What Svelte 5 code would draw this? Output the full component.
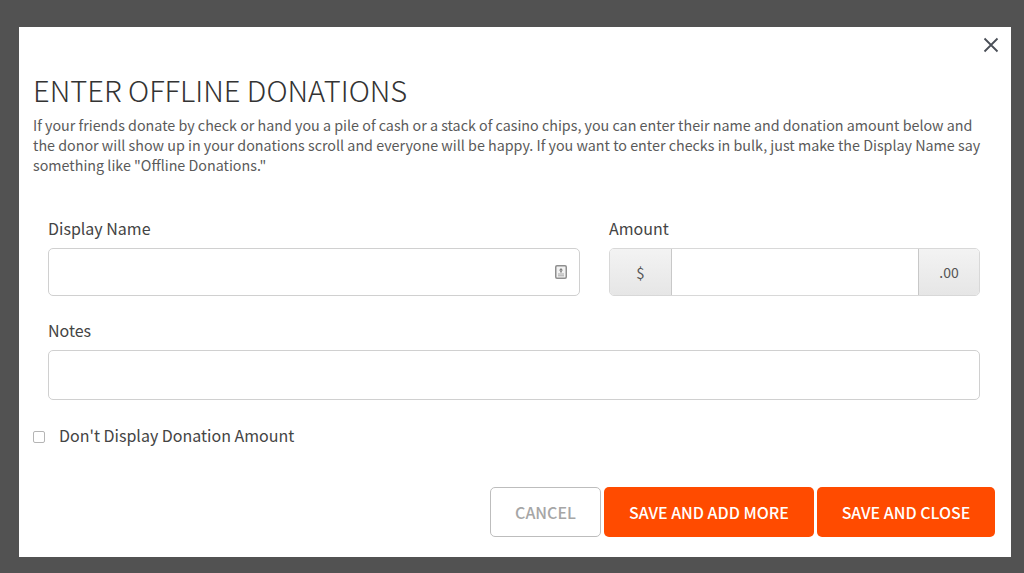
<script>
	let displayName = $state('');
	let amount = $state('');
	let notes = $state('');
	let hideAmount = $state(false);
</script>

<div class="overlay">
	<div class="modal">
		<div class="close-row">
			<button class="close" aria-label="Close">
				<svg viewBox="0 0 16 16" width="16" height="16">
					<path d="M1.5 1.5l13 13M14.5 1.5l-13 13" stroke="#4a4f57" stroke-width="1.8" fill="none" />
				</svg>
			</button>
		</div>

		<h1>ENTER OFFLINE DONATIONS</h1>
		<p class="intro">
			If your friends donate by check or hand you a pile of cash or a stack of casino chips, you can enter their name and donation amount below and the donor will show up in your donations scroll and everyone will be happy. If you want to enter checks in bulk, just make the Display Name say something like "Offline Donations."
		</p>

		<div class="form">
			<div class="row">
				<div class="field name">
					<label for="display-name">Display Name</label>
					<div class="input-wrap">
						<input id="display-name" bind:value={displayName} />
						<svg class="contact-icon" viewBox="0 0 12 14" width="12" height="14">
							<rect x="0.75" y="0.75" width="10.5" height="12.5" rx="1.2" fill="#f2f2f2" stroke="#8f8f8f" stroke-width="1.5" />
							<path d="M6 3l2 2.4H4z" fill="#7d7d7d" />
							<path d="M5.2 5.4h1.6v2.2H5.2z" fill="#7d7d7d" />
							<path d="M3 9h6M3 10.8h6" stroke="#a8a8a8" />
						</svg>
					</div>
				</div>
				<div class="field amount">
					<label for="amount">Amount</label>
					<div class="group">
						<span class="addon dollar">$</span>
						<input id="amount" bind:value={amount} />
						<span class="addon cents">.00</span>
					</div>
				</div>
			</div>

			<div class="field">
				<label for="notes">Notes</label>
				<input id="notes" class="notes" bind:value={notes} />
			</div>
		</div>

		<label class="check">
			<input type="checkbox" bind:checked={hideAmount} />
			<span>Don't Display Donation Amount</span>
		</label>

		<div class="actions">
			<button class="btn cancel">CANCEL</button>
			<button class="btn primary more">SAVE AND ADD MORE</button>
			<button class="btn primary done">SAVE AND CLOSE</button>
		</div>
	</div>
</div>

<style>
	:global(body) {
		margin: 0;
	}

	.overlay {
		box-sizing: border-box;
		height: 573px;
		padding: 27px 13px 16px 19px;
		background: #525252;
		font-family: "Noto Sans CJK SC", "Open Sans", sans-serif;
	}

	.modal {
		box-sizing: border-box;
		height: 530px;
		padding: 0 16px 0 14px;
		background: #fff;
		display: flex;
		flex-direction: column;
	}

	.close-row {
		display: flex;
		justify-content: flex-end;
		height: 44px;
		margin-right: -4px;
	}

	.close {
		margin-top: 10px;
		width: 16px;
		height: 16px;
		padding: 0;
		border: none;
		background: none;
		cursor: pointer;
	}

	.close svg {
		display: block;
	}

	h1 {
		margin: 0;
		font-size: 29.1px;
		line-height: 36px;
		font-weight: 300;
		color: #333;
	}

	.intro {
		margin: 8px 0 0;
		width: 950px;
		font-size: 14.3px;
		line-height: 20px;
		color: #5a5a5a;
	}

	.form {
		margin: 41px 0 0 15px;
		width: 932px;
		display: flex;
		flex-direction: column;
		gap: 22px;
	}

	.row {
		display: flex;
		gap: 29px;
	}

	.field {
		display: flex;
		flex-direction: column;
	}

	.name {
		width: 532px;
	}

	.amount {
		width: 371px;
	}

	label {
		font-size: 16px;
		line-height: 24px;
		color: #444;
	}

	.field > label {
		margin-bottom: 8px;
	}

	input:not([type='checkbox']) {
		box-sizing: border-box;
		width: 100%;
		height: 48px;
		padding: 0 12px;
		border: 1px solid #d0d0d0;
		border-radius: 5px;
		background: #fff;
		font: inherit;
		outline: none;
	}

	.input-wrap {
		position: relative;
	}

	.contact-icon {
		position: absolute;
		right: 13px;
		top: 17px;
	}

	.group {
		display: flex;
		height: 48px;
		box-sizing: border-box;
		border: 1px solid #d8d8d8;
		border-radius: 5px;
		overflow: hidden;
	}

	.group input {
		flex: 1;
		min-width: 0;
		height: 46px;
		border: none;
		border-radius: 0;
	}

	.addon {
		display: flex;
		align-items: center;
		justify-content: center;
		background: linear-gradient(#f3f3f3, #e6e6e6);
		color: #555;
		font-size: 14px;
	}

	.dollar {
		width: 61px;
		border-right: 1px solid #c8c8c8;
		font-size: 15px;
	}

	.cents {
		width: 60px;
		border-left: 1px solid #c8c8c8;
	}

	input.notes {
		height: 50px;
	}

	.check {
		margin-top: 23px;
		display: flex;
		align-items: center;
		gap: 14px;
		width: max-content;
	}

	.check input {
		appearance: none;
		box-sizing: border-box;
		width: 12px;
		height: 12px;
		margin: 4px 0 0;
		border: 1px solid #b5b5b5;
		border-radius: 2px;
		background: #fff;
	}

	.actions {
		margin-top: 40px;
		display: flex;
		justify-content: flex-end;
		gap: 3px;
	}

	.btn {
		height: 50px;
		border-radius: 5px;
		font-family: inherit;
		font-size: 16px;
		font-weight: 500;
		cursor: pointer;
	}

	.cancel {
		width: 111px;
		background: #fff;
		border: 1px solid #bdbdbd;
		color: #a6a6a6;
	}

	.primary {
		border: none;
		background: #ff4b00;
		color: #fff;
	}

	.more {
		width: 210px;
	}

	.done {
		width: 178px;
	}
</style>
